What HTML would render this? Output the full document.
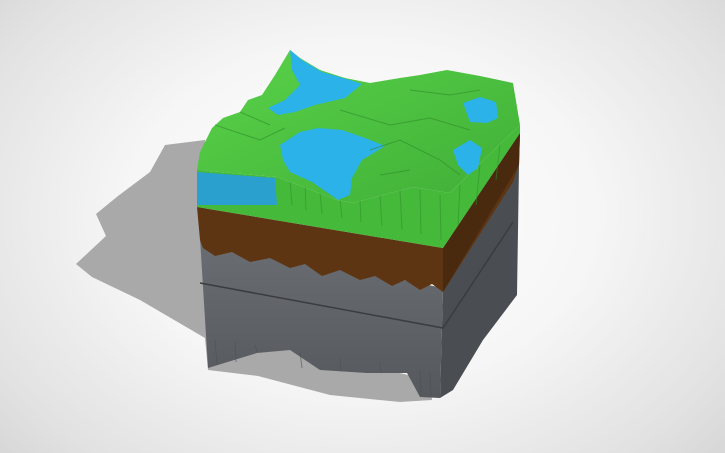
<!DOCTYPE html>
<html><head><style>
html,body{margin:0;padding:0;width:725px;height:453px;overflow:hidden}
body{background:radial-gradient(ellipse 520px 380px at 360px 215px,#ffffff 0%,#f6f6f6 45%,#e2e2e2 80%,#d2d2d2 100%)}
svg{position:absolute;left:0;top:0}
</style></head><body>
<svg width="725" height="453" viewBox="0 0 725 453">
<defs>
<linearGradient id="gr" x1="0" y1="0" x2="0" y2="1"><stop offset="0" stop-color="#6a6d72"/><stop offset="1" stop-color="#55585c"/></linearGradient>
<linearGradient id="top" x1="0" y1="0" x2="1" y2="1"><stop offset="0" stop-color="#5ad34a"/><stop offset="1" stop-color="#3fae36"/></linearGradient>
</defs>
<polygon fill="#a9a9a9" points="205,140 165,145 150,172 118,196 96,214 106,236 76,264 92,277 140,300 205,338 208,370 258,376 330,395 400,402 432,400 430,380 300,350 210,300"/>
<polygon fill="#4a4d51" points="443,288 513,180 519,165 517,295 483,340 453,390 440,398"/>
<polygon fill="url(#gr)" points="200,238 443,288 440,398 420,397 407,373 367,373 320,370 290,350 257,353 208,368"/>
<g stroke="#4e5155" stroke-width="1" opacity="0.6">
<path d="M215,340 L217,365 M235,342 L236,362 M255,345 L257,352 M300,352 L302,368 M340,358 L341,371 M380,362 L381,373 M420,370 L421,395 M430,372 L431,397"/>
</g>
<polyline fill="none" stroke="#3a3c40" stroke-width="1.5" points="200,283 443,328 513,222"/>
<polygon fill="#5e3512" points="197,207 443,248 520,133 519,165 513,182 443,292 432,284 420,290 405,280 392,286 375,276 360,280 340,270 322,276 305,264 290,268 270,258 250,262 232,252 215,256 203,248 200,240"/>
<polygon fill="#4a2a0e" points="443,248 520,133 519,165 443,292"/>
<polygon fill="#45b93a" points="197,170 277,177 337,200 353,203 413,187 450,193 473,170 520,125 520,133 443,248 197,207"/>
<polygon fill="#2aa0cf" points="197,172 275,178 277,205 197,205"/>
<g stroke="#2e8f2a" stroke-width="1" opacity="0.55">
<path d="M290,180 L292,205 M305,185 L306,210 M320,192 L322,214 M340,200 L342,218 M360,200 L361,222 M380,195 L382,226 M400,190 L402,230 M420,190 L421,234 M440,195 L441,240 M460,185 L458,225 M480,165 L476,205 M500,145 L496,180"/>
</g>
<polygon fill="url(#top)" points="197,170 200,152 212,128 223,118 240,112 248,100 262,95 275,75 290,50 300,58 320,70 345,78 370,83 400,78 420,75 447,70 480,76 513,83 520,125 473,170 450,193 413,187 353,203 337,200 277,177"/>
<polygon fill="#2bb2e8" points="290,50 302,60 322,72 350,80 362,84 345,98 315,105 295,112 278,115 268,108 285,100 300,85 292,70"/>
<polygon fill="#2bb2e8" points="280,145 300,132 318,128 342,130 365,138 385,146 362,160 352,178 350,195 338,200 312,182 290,172 283,160"/>
<polygon fill="#2bb2e8" points="463,103 480,97 496,102 498,118 487,123 470,122"/>
<polygon fill="#2bb2e8" points="453,150 470,140 482,148 478,168 468,175 458,165"/>
<g fill="none" stroke="#2f8a2a" stroke-width="1" opacity="0.6">
<path d="M215,125 L260,140 L285,128"/><path d="M340,110 L390,125 L430,118 L470,130"/><path d="M370,150 L400,140 L440,160 L460,175"/><path d="M410,90 L450,95 L480,90"/><path d="M240,112 L270,125"/><path d="M380,175 L410,170"/>
</g>
</svg>
</body></html>
